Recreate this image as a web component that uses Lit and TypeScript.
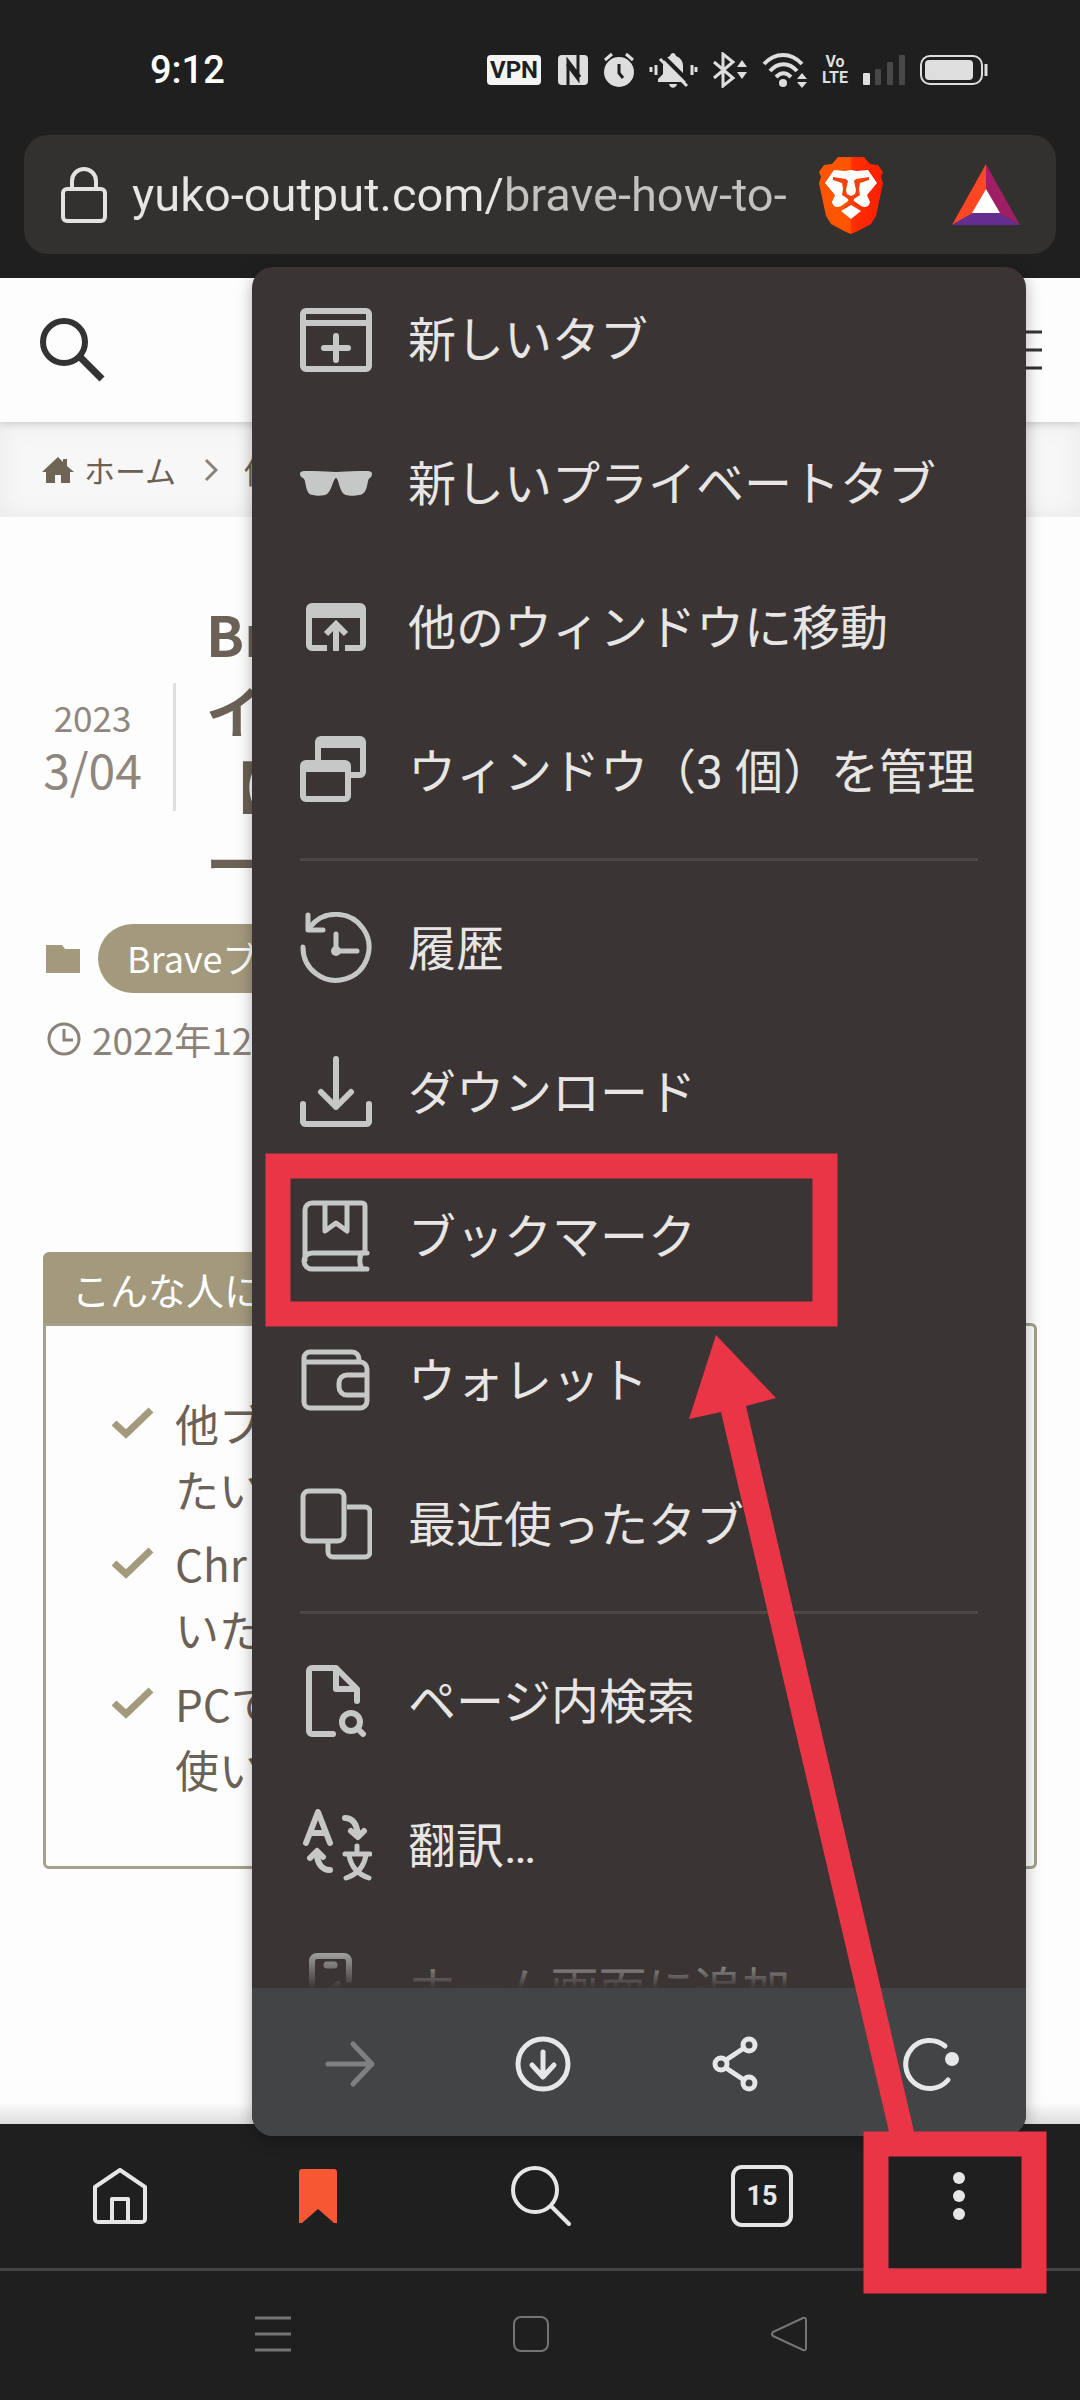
import { LitElement, html, svg, css, type TemplateResult } from "lit";
import { customElement } from "lit/decorators.js";

type Icon = TemplateResult;

const menuIcons: Record<string, Icon> = {
  newTab: svg`<rect x="3" y="8" width="66" height="58" rx="3"/><path d="M3 20h66M36 33v24M24 45h24" stroke-linecap="round"/>`,
  glasses: svg`<path class="solid" d="M0 27c0-3 3-3 6-3h8c8 0 16 1 22 1s14-1 22-1h8c3 0 6 0 6 3 0 4-3 3-4 7-1 7-3 14-9 14-4 1-10 1-13 0-7-2-7-17-10-17s-4 15-11 17c-4 1-9 1-12 0-6 0-7-8-8-14-1-4-5-3-5-7z"/>`,
  moveWindow: svg`<path class="solid" fill-rule="evenodd" d="M12 12h48a6 6 0 0 1 6 6v36a6 6 0 0 1-6 6H45v-6h15V27H12v27h15v6H12a6 6 0 0 1-6-6V18a6 6 0 0 1 6-6z"/><path d="M36 60V34M26 43l10-10 10 10"/>`,
  windows: svg`<path class="solid" fill-rule="evenodd" d="M21 1h39a6 6 0 0 1 6 6v30a6 6 0 0 1-6 6h-9v-6h9V13H21v12h-6V7a6 6 0 0 1 6-6zM6 25h39a6 6 0 0 1 6 6v30a6 6 0 0 1-6 6H6a6 6 0 0 1-6-6V31a6 6 0 0 1 6-6zm0 12v24h39V37z"/>`,
  history: svg`<g stroke-width="5" stroke-linecap="round" stroke-linejoin="round"><path d="M3 35a33 33 0 1 0 7-20"/><path d="M8 3v15h15M36 22v17h21"/></g><circle class="solid" cx="36" cy="39" r="5"/>`,
  download: svg`<g stroke-linecap="round" stroke-linejoin="round"><path d="M36 3v48M21 36l15 15 15-15M3 48v18a3 3 0 0 0 3 2h60a3 3 0 0 0 3-2V48"/></g>`,
  bookmarks: svg`<g stroke-width="5" stroke-linecap="round" stroke-linejoin="round"><path d="M5 60V10a7 7 0 0 1 7-7h50a3 3 0 0 1 3 3v47M67 53H12a8 8 0 0 0 0 16h55M62 53c-3 4-3 11 0 16"/><path d="M25 4v27l11-8 11 8V4"/></g>`,
  wallet: svg`<g stroke-width="5" stroke-linejoin="round"><path d="M4 18h56a7 7 0 0 1 7 7v32a7 7 0 0 1-7 7H10a6 6 0 0 1-6-6V14a6 6 0 0 1 6-6h42a7 7 0 0 1 7 7v3M67 31H47a8 8 0 0 0-8 8v4a8 8 0 0 0 8 8h20"/></g>`,
  recent: svg`<g stroke-width="5"><rect x="3" y="3" width="41" height="50" rx="6"/><path d="M47 19h18a5 5 0 0 1 5 5v40a5 5 0 0 1-5 5H33a5 5 0 0 1-5-5V55"/></g>`,
  find: svg`<g stroke-linecap="round" stroke-linejoin="round"><path d="M33 69H12a3 3 0 0 1-3-3V6a3 3 0 0 1 3-3h24l21 21v12M36 4v20h20"/><circle cx="51" cy="57" r="9" stroke-width="6"/><path d="M58 64l5 5"/></g>`,
  translate: svg`<g stroke-linecap="round" stroke-linejoin="round"><path d="M6 34L18 3l12 31M11 24h14"/><path d="M45 9c9 0 12 8 13 17M51 22l7 6 6-6M30 61c-9 0-13-8-13-16M10 49l7-7 6 6"/><path d="M57 37v7M45 45h25M49 46c2 12 8 19 20 23M66 46c-2 12-8 19-20 23" stroke-width="5"/></g>`,
  addHome: svg`<g stroke-linecap="round"><path d="M12 69V8a5 5 0 0 1 5-5h27a5 5 0 0 1 5 5v19M38 31L24 45"/><path d="M27 12h7" stroke-width="7"/></g>`,
};

const sections: { icon: string; label: string }[][] = [
  [
    { icon: "newTab", label: "新しいタブ" },
    { icon: "glasses", label: "新しいプライベートタブ" },
    { icon: "moveWindow", label: "他のウィンドウに移動" },
    { icon: "windows", label: "ウィンドウ（3 個）を管理" },
  ],
  [
    { icon: "history", label: "履歴" },
    { icon: "download", label: "ダウンロード" },
    { icon: "bookmarks", label: "ブックマーク" },
    { icon: "wallet", label: "ウォレット" },
    { icon: "recent", label: "最近使ったタブ" },
  ],
  [
    { icon: "find", label: "ページ内検索" },
    { icon: "translate", label: "翻訳…" },
    { icon: "addHome", label: "ホーム画面に追加" },
  ],
];

@customElement("status-bar")
class StatusBar extends LitElement {
  static styles = css`
    :host { display: flex; align-items: center; justify-content: space-between; height: 135px; box-sizing: border-box; padding: 4px 92px 0 150px; color: #fff; font-family: Roboto, sans-serif; }
    .time { font-size: 38px; font-weight: 500; }
    .icons { display: flex; align-items: center; gap: 14px; height: 36px; color: #dedede; }
    .icons svg { display: block; fill: none; stroke: currentColor; }
    .f { fill: currentColor; stroke: none; }
    .vpn { background: #f4f4f4; color: #1f1f1f; border-radius: 4px; height: 30px; width: 54px; line-height: 31px; text-align: center; font-size: 24px; font-weight: 700; margin-right: 2px; }
    .volte { font: 700 16px/16px Roboto, sans-serif; width: 26px; display: flex; flex-direction: column; align-items: center; }
  `;
  render() {
    return html`
      <span class="time">9:12</span>
      <div class="icons">
        <span class="vpn">VPN</span>
        <svg width="32" height="36" viewBox="0 0 32 36"><rect class="f" x="1" y="3" width="30" height="30" rx="4"/><path d="M11 33V9l12 16M21 3v24L10 12" stroke="#1f1f1f" stroke-width="3"/></svg>
        <svg width="32" height="36" viewBox="0 0 32 36"><circle class="f" cx="16" cy="20" r="15"/><path d="M2 8l7-6M30 8l-7-6" stroke-width="3"/><path d="M16 12v9l4 5" stroke="#1f1f1f" stroke-width="3"/></svg>
        <svg width="49" height="36" viewBox="0 0 49 36"><path class="f" d="M9 30v-3l5-5v-8a11 11 0 0 1 7-10c1-4 5-4 6 0a11 11 0 0 1 7 10v9l6 7zM20 32h8c-1 5-7 5-8 0z"/><path d="M13 3l29 29" stroke="#1f1f1f" stroke-width="4"/><path d="M11 7l27 27M2 15v5M7 13v10M47 15v5M43 13v10" stroke-width="3"/></svg>
        <svg width="36" height="36" viewBox="0 0 36 36"><path d="M2 10l19 16-10 8V2l10 8L2 26" stroke-width="3"/><path class="f" d="M25 15l5-7 5 7zM25 20l5 7 5-7z"/></svg>
        <svg width="46" height="36" viewBox="0 0 46 36"><path d="M2 12c11-12 27-12 38 0M8 19c8-9 19-9 27 0M14 25c5-5 10-5 15 0" stroke-width="4"/><circle class="f" cx="21" cy="31" r="4"/><path class="f" d="M35 27l5-6 5 6zM35 30l5 6 5-6z"/></svg>
        <span class="volte"><span>Vo</span><span>LTE</span></span>
        <svg width="44" height="36" viewBox="0 0 44 36"><rect class="f" x="1" y="21" width="7" height="12" rx="1"/><g fill="#484848" stroke="none"><rect x="13" y="17" width="6" height="16" rx="1"/><rect x="25" y="10" width="6" height="23" rx="1"/><rect x="37" y="3" width="6" height="30" rx="1"/></g></svg>
        <svg width="68" height="36" viewBox="0 0 68 36"><rect x="1" y="4" width="61" height="28" rx="9" stroke-width="2"/><rect class="f" x="5" y="8" width="48" height="20" rx="4"/><path d="M66 12v12" stroke-width="3"/></svg>
      </div>`;
  }
}

@customElement("address-bar")
class AddressBar extends LitElement {
  static styles = css`
    :host { display: block; padding: 0 24px 24px 24px; }
    .bar { display: flex; align-items: center; height: 119px; border-radius: 24px; background: #33312f; padding: 0 36px; }
    svg { display: block; flex: none; }
    button { border: 0; padding: 0; background: none; }
    .url { flex: 1; min-width: 0; margin: 0 32px 0 24px; padding: 0; border: 0; outline: 0; height: 70px; font: 400 47px/70px Roboto, sans-serif; color: transparent; background: linear-gradient(90deg, #e8e6e4 370px, #c3c1bf 370px); background-clip: text; -webkit-background-clip: text; }
    .shield { margin-right: 68px; }
  `;
  render() {
    return html`<div class="bar">
      <button aria-label="保護された通信"><svg width="48" height="58" viewBox="0 0 48 58" fill="none" stroke="#e4e2e0" stroke-width="4"><rect x="3" y="23" width="42" height="32" rx="4"/><path d="M12 23V15a12 12 0 0 1 24 0v8"/></svg></button>
      <input class="url" aria-label="アドレス" .value=${"yuko-output.com/brave-how-to-"} />
      <button class="shield" aria-label="Brave Shields"><svg width="66" height="78" viewBox="0 0 66 78">
        <defs><linearGradient id="lion"><stop offset=".48" stop-color="#ff5500"/><stop offset=".52" stop-color="#ff2f00"/><stop offset="1" stop-color="#ff1e00"/></linearGradient></defs>
        <path fill="url(#lion)" d="M20 1h26l6 7 8 1 5 7-2 5 2 6-7 33-5 8-15 8-5 2-5-2-15-8-5-8L1 27l2-6-2-5 5-7 8-1z"/>
        <path fill="#fff" d="M16 14l11 1 6-1 6 1 11-1 9 13-10 12 3 7c-1 5-5 6-9 4l-10-7-10 7c-4 2-8 1-9-4l3-7L7 27z"/>
        <path fill="#f4420c" d="M15 21l13 2 2 2-2 9 1 4 4 2 4-2 1-4-2-9 2-2 13-2v3l-9 3-1 6 1 6-6 4-1 4 6 5-2 2-6-4-6 4-2-2 6-5-1-4-6-4 1-6-1-6-9-3z"/>
        <path fill="#fff" d="M33 49l10 6-10 8-10-8z"/></svg></button>
      <button aria-label="Brave Rewards"><svg width="68" height="62" viewBox="0 0 68 62"><path fill="#ff4724" d="M34 0v25L21 49 0 61z"/><path fill="#9e1f63" d="M34 0l34 61-21-12-13-24z"/><path fill="#662d91" d="M0 61l21-12h26l21 12z"/><path fill="#fff" d="M34 25l14 24H20z"/></svg></button>
    </div>`;
  }
}

@customElement("web-page")
class WebPage extends LitElement {
  static styles = css`
    :host { display: block; overflow: hidden; background: linear-gradient(to top, #dcdcdc, #fdfdfd 22px); color: #6b6156; font-family: "Noto Sans CJK JP", sans-serif; }
    button { border: 0; padding: 0; background: none; }
    svg { display: block; flex: none; }
    header { display: flex; justify-content: space-between; align-items: center; height: 144px; padding: 0 38px 0 39px; background: #fdfdfd; position: relative; box-shadow: 0 1px 8px rgba(0, 0, 0, .18); }
    .crumbs { display: flex; align-items: center; height: 95px; padding-left: 42px; background: #f7f7f7; box-shadow: inset 0 0 24px #e8e8e8; font-size: 31px; line-height: 44px; }
    .crumbs a { color: inherit; text-decoration: none; display: flex; align-items: center; gap: 10px; }
    .crumbs .arrow { margin: 0 26px 0 28px; }
    .head { display: flex; align-items: center; margin-top: 78px; padding-left: 43px; }
    .date { width: 99px; text-align: center; color: #8f877e; flex: none; margin-top: -8px; }
    .year { font-size: 35px; line-height: 50px; display: block; }
    .day { font-size: 48px; line-height: 52px; display: block; }
    h1 { margin: 0 0 0 30px; padding-left: 0; font-size: 56px; line-height: 76px; font-weight: 700; white-space: nowrap; }
    .rule { width: 3px; height: 128px; background: #dfdfdf; margin-left: 31px; }
    .tags { display: flex; align-items: center; gap: 18px; margin: 25px 0 0 46px; }
    .tag { display: block; height: 69px; flex: 1; padding-left: 29px; border-radius: 35px; background: #a3997d; color: #fff; font-size: 36px; line-height: 66px; margin-right: 46px; text-decoration: none; max-width: 300px; }
    .updated { display: flex; align-items: center; gap: 10px; margin: 18px 0 0 46px; font-size: 37px; line-height: 56px; color: #8b8379; }
    .box { margin: 185px 43px 0; }
    h2 { margin: 0; font-size: 38px; font-weight: 400; line-height: 73px; height: 73px; width: 480px; background: #a3997d; color: #fff; border-radius: 6px 6px 0 0; padding-left: 29px; box-sizing: border-box; }
    ul { list-style: none; margin: -2px 0 0; border: 3px solid #a3a08c; border-radius: 0 6px 6px 6px; padding: 64px 0 64px 64px; display: flex; flex-direction: column; gap: 8px; font-size: 44px; line-height: 66px; }
    li { display: flex; gap: 21px; }
    li svg { margin-top: 16px; }
  `;
  render() {
    const points = [["他ブ", "たい"], ["Chr", "いた"], ["PCで", "使い"]];
    return html`
      <header>
        <button aria-label="検索"><svg width="66" height="66" viewBox="0 0 66 66" fill="none" stroke="#333"><circle cx="25" cy="25" r="21" stroke-width="6"/><path d="M41 40l22 22" stroke-width="7"/></svg></button>
        <button aria-label="メニュー"><svg width="40" height="40" viewBox="0 0 40 40" stroke="#333" stroke-width="3"><path d="M0 2h40M0 20h40M0 38h40"/></svg></button>
      </header>
      <nav class="crumbs">
        <a href="#"><svg width="32" height="26" viewBox="0 0 32 26" fill="#6f6557"><path d="M16 0l5 5V2h4v7l7 6h-4v11h-9v-8h-6v8H4V15H0z"/></svg>ホーム</a>
        <svg class="arrow" width="14" height="24" viewBox="0 0 14 24" fill="none" stroke="#8b8379" stroke-width="3"><path d="M2 2l10 10L2 22"/></svg>
        <a href="#">使</a>
      </nav>
      <div class="head">
        <div class="date"><span class="year">2023</span><span class="day">3/04</span></div>
        <div class="rule"></div>
        <h1>Br<br />イ<br />【<br />ー</h1>
      </div>
      <div class="tags">
        <svg width="34" height="28" viewBox="0 0 34 28" fill="#a3997d"><path d="M0 0h16l3 4h15v24H0z"/></svg>
        <a class="tag" href="#">Braveブ</a>
      </div>
      <div class="updated"><svg width="36" height="36" viewBox="0 0 36 36" fill="none" stroke="#8b8379" stroke-width="3"><circle cx="18" cy="18" r="15"/><path d="M18 8v11h9"/></svg>2022年12</div>
      <section class="box">
        <h2>こんな人に</h2>
        <ul>${points.map((p) => html`<li><svg width="44" height="34" viewBox="0 0 44 34" fill="none" stroke="#a3997d" stroke-width="7"><path d="M4 17l12 11L41 4"/></svg><span>${p[0]}<br />${p[1]}</span></li>`)}</ul>
      </section>`;
  }
}

@customElement("browser-menu")
class BrowserMenu extends LitElement {
  static styles = css`
    :host { display: flex; flex-direction: column; overflow: hidden; border-radius: 21px; background: #3a3534; color: #e8e6e4; font-family: Roboto, "Noto Sans CJK JP", sans-serif; box-shadow: 0 4px 16px rgba(0, 0, 0, .3); }
    button { border: 0; padding: 0; background: none; color: inherit; font: inherit; }
    svg { display: block; flex: none; }
    .list { flex: 1; min-height: 0; overflow: hidden; position: relative; }
    .list::after { content: ""; position: absolute; inset: auto 0 0; height: 48px; background: linear-gradient(transparent, #3a3534); }
    .item { display: flex; align-items: center; gap: 36px; width: 100%; height: 144px; padding: 0 48px; font-size: 48px; line-height: 72px; text-align: left; white-space: nowrap; }
    .item span { padding-top: 3px; }
    .item svg { fill: none; stroke: #c6c8c7; stroke-width: 6; }
    .solid { fill: #c6c8c7; stroke: none; }
    hr { height: 3px; margin: 15px 48px; border: 0; background: #4b4846; }
    .foot { display: grid; grid-template-columns: repeat(4, 1fr); height: 148px; background: #434446; }
    .foot button { display: flex; align-items: center; justify-content: center; padding-top: 4px; }
    .foot svg { fill: none; stroke: #e6e7e8; stroke-width: 5; stroke-linecap: round; stroke-linejoin: round; }
    .foot .off { stroke: #7d7f81; }
    .foot .dot { fill: #e6e7e8; stroke: none; }
  `;
  render() {
    return html`
      <div class="list">
        ${sections.map((s, i) => html`${i ? html`<hr />` : ""}${s.map((m) => html`<button class="item"><svg width="72" height="72" viewBox="0 0 72 72">${menuIcons[m.icon]}</svg><span>${m.label}</span></button>`)}`)}
      </div>
      <div class="foot">
        <button aria-label="進む" disabled><svg class="off" width="60" height="60" viewBox="0 0 60 60"><path d="M9 30h44M34 10l19 20-19 20"/></svg></button>
        <button aria-label="ページをダウンロード"><svg width="60" height="60" viewBox="0 0 60 60"><circle cx="31" cy="30" r="25"/><path d="M31 18v24M20 31l11 12 11-12"/></svg></button>
        <button aria-label="共有"><svg width="60" height="60" viewBox="0 0 60 60"><circle cx="43" cy="11" r="6"/><circle cx="15" cy="30" r="6"/><circle cx="43" cy="49" r="6"/><path d="M20 26l18-12M20 34l18 12"/></svg></button>
        <button aria-label="再読み込み"><svg width="60" height="60" viewBox="0 0 60 60"><path d="M46 12a24 24 0 1 0 3 34"/><circle class="dot" cx="53" cy="25" r="7"/></svg></button>
      </div>`;
  }
}

@customElement("bottom-bars")
class BottomBars extends LitElement {
  static styles = css`
    :host { display: block; background: #1f1f1f; }
    button { border: 0; padding: 0; background: none; display: flex; align-items: center; justify-content: center; }
    svg { display: block; fill: none; stroke: #e6e6e6; stroke-width: 4; }
    .tools { display: grid; grid-template-columns: 240fr 156fr 290fr 152fr 242fr; height: 144px; border-bottom: 3px solid #434343; }
    .count { width: 62px; height: 62px; box-sizing: border-box; border: 4px solid #e6e6e6; border-radius: 11px; color: #e6e6e6; font: 700 27px/54px Roboto, sans-serif; text-align: center; }
    .system { display: grid; grid-template-columns: repeat(3, 1fr); height: 125px; padding: 0 162px 4px 144px; }
    .system svg { stroke: #747474; stroke-width: 2; }
    .system .keys { stroke-width: 3; }
  `;
  render() {
    return html`
      <div class="tools">
        <button aria-label="ホーム"><svg width="56" height="58" viewBox="0 0 56 58" stroke-linejoin="round"><path d="M3 20L28 3l25 17v32a3 3 0 0 1-3 3H6a3 3 0 0 1-3-3zM20 55V32h16v23"/></svg></button>
        <button aria-label="ブックマーク"><svg width="40" height="54" viewBox="0 0 40 54"><path fill="#f75733" stroke="none" d="M4 0h32a3 3 0 0 1 3 3v51h-3L20 40 4 54H1V3a3 3 0 0 1 3-3z"/></svg></button>
        <button aria-label="検索"><svg width="62" height="62" viewBox="0 0 62 62" stroke-linecap="round"><circle cx="25" cy="25" r="22"/><path d="M41 41l18 18"/></svg></button>
        <button aria-label="タブ"><span class="count">15</span></button>
        <button aria-label="メニュー"><svg width="16" height="50" viewBox="0 0 16 50"><g fill="#e6e6e6" stroke="none"><circle cx="8" cy="7" r="6"/><circle cx="8" cy="25" r="6"/><circle cx="8" cy="43" r="6"/></g></svg></button>
      </div>
      <div class="system">
        <button aria-label="履歴キー"><svg class="keys" width="36" height="38" viewBox="0 0 36 38"><path d="M0 3h36M0 19h36M0 35h36"/></svg></button>
        <button aria-label="ホームキー"><svg width="38" height="38" viewBox="0 0 38 38"><rect x="2" y="2" width="34" height="34" rx="7"/></svg></button>
        <button aria-label="戻るキー"><svg width="38" height="38" viewBox="0 0 38 38" stroke-linejoin="round"><path d="M33 3L3 17q-2 2 0 4l30 14q3 1 3-2V5q0-3-3-2z"/></svg></button>
      </div>`;
  }
}

@customElement("app-root")
class AppRoot extends LitElement {
  static styles = css`
    :host { display: flex; flex-direction: column; position: relative; min-height: 100vh; background: #1f1f1f; }
    web-page { flex: 1; }
    browser-menu { position: absolute; left: 252px; right: 54px; top: 267px; bottom: 264px; }
    .marks { position: absolute; inset: 0; width: 100%; height: 100%; pointer-events: none; }
  `;
  render() {
    return html`
      <status-bar></status-bar>
      <address-bar></address-bar>
      <web-page></web-page>
      <bottom-bars></bottom-bars>
      <browser-menu></browser-menu>
      <svg class="marks" viewBox="0 0 1080 2400" fill="none" stroke="#e93546" stroke-width="25">
        <rect x="278" y="1166" width="547" height="148"/>
        <rect x="876" y="2144" width="158" height="137"/>
        <path fill="#e93546" stroke="none" d="M716 1335l60 63-30 8 169 730h-25L721 1412l-32 7z"/>
      </svg>`;
  }
}
